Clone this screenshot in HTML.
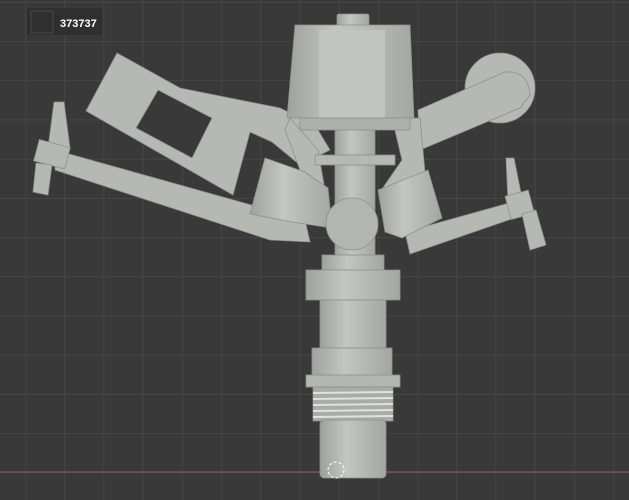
<!DOCTYPE html>
<html><head><style>
html,body{margin:0;padding:0;width:629px;height:500px;overflow:hidden;background:#393939}
</style></head><body>
<svg width="629" height="500" viewBox="0 0 629 500" xmlns="http://www.w3.org/2000/svg">
<defs>
<pattern id="g" x="-14" y="2" width="39.2" height="39.2" patternUnits="userSpaceOnUse">
<path d="M0 0H39.2M0 0V39.2" stroke="#4d4d4d" stroke-width="1.2" fill="none"/>
</pattern>
<linearGradient id="cyl" x1="0" x2="1"><stop offset="0" stop-color="#9fa19d"/><stop offset="0.4" stop-color="#c4c6c1"/><stop offset="1" stop-color="#a4a6a2"/></linearGradient>
</defs>
<rect width="629" height="500" fill="#393939"/>
<rect width="629" height="500" fill="url(#g)"/>
<line x1="0" y1="472" x2="629" y2="472" stroke="#7a5050" stroke-width="1.5"/>
<rect x="27" y="8" width="75" height="27" fill="#2f2f2f"/>
<rect x="31" y="11" width="22" height="22" fill="none" stroke="#4a4a4a"/>
<text x="60" y="27" font-family="Liberation Sans,sans-serif" font-size="11" font-weight="bold" fill="#fff">373737</text>
<g fill="#b6b8b3" stroke="#8e908c" stroke-width="0.8">
<!-- lower left arm -->
<polygon points="55,150 305,220 310,242 270,240 55,170"/>
<!-- left spike -->
<polygon points="54,102 64,102 70,148 48,148"/>
<rect x="36" y="143" width="32" height="22" transform="rotate(15 51 154)"/>
<polygon points="36,163 52,165 48,195 33,192"/>
<!-- paddle -->
<polygon points="117,53 180,88 280,108 315,125 330,150 300,165 272,142 250,132 233,195 86,111" />
<polygon points="136,128 158,90 212,118 192,158" fill="#393939"/>
<!-- right counterweight arm -->
<circle cx="500" cy="88" r="35"/>
<path d="M418 110 L505 72 Q528 70 530 95 L520 108 L420 150 Z"/>
<!-- right lower arm -->
<polygon points="405,232 520,200 526,214 410,254"/>
<polygon points="506,158 514,158 522,198 508,202"/>
<rect x="508" y="193" width="24" height="24" transform="rotate(-15 519 206)"/>
<polygon points="522,214 536,210 546,245 530,250"/>
<!-- stem -->
<rect x="335" y="118" width="40" height="160" fill="url(#cyl)"/>
<!-- yoke curves -->
<path d="M392 118 L420 118 L425 172 L400 200 L380 192 L402 160 Z"/>
<path d="M290 118 L318 150 L325 190 L300 170 L285 130 Z"/>
<!-- top cap -->
<rect x="337" y="14" width="32" height="16" rx="2" fill="url(#cyl)"/>
<polygon points="295,25 410,25 414,118 287,118" fill="url(#cyl)"/>
<rect x="319" y="30" width="66" height="88" fill="#c2c4bf" stroke="none"/>
<rect x="300" y="118" width="110" height="12" fill="#aeb0ab"/>
<rect x="315" y="155" width="80" height="10"/>
<!-- left nozzle -->
<polygon points="265,158 305,172 328,188 332,228 292,222 250,214" fill="url(#cyl)"/>
<!-- right nozzle -->
<polygon points="378,190 428,170 442,218 402,238 385,232" fill="url(#cyl)"/>
<circle cx="352" cy="224" r="26" fill="#b3b5b0"/>
<!-- lower body -->
<rect x="322" y="255" width="62" height="20" fill="url(#cyl)"/>
<rect x="306" y="270" width="94" height="30" fill="url(#cyl)"/>
<rect x="320" y="300" width="66" height="48" fill="url(#cyl)"/>
<rect x="312" y="348" width="80" height="38" fill="url(#cyl)"/>
<rect x="306" y="375" width="94" height="12" fill="#b4b6b1"/>
<rect x="313" y="387" width="80" height="34" fill="#aaaca7"/>
<rect x="320" y="420" width="66" height="58" rx="4" fill="url(#cyl)"/>
</g>
<g stroke="#e0e2dd" stroke-width="2">
<line x1="313" y1="393" x2="393" y2="392"/><line x1="313" y1="399" x2="393" y2="398"/>
<line x1="313" y1="405" x2="393" y2="404"/><line x1="313" y1="411" x2="393" y2="410"/>
<line x1="313" y1="417" x2="393" y2="416"/>
</g>
<circle cx="336" cy="470" r="8" fill="none" stroke="#fff" stroke-dasharray="3 2"/>
</svg>
</body></html>
